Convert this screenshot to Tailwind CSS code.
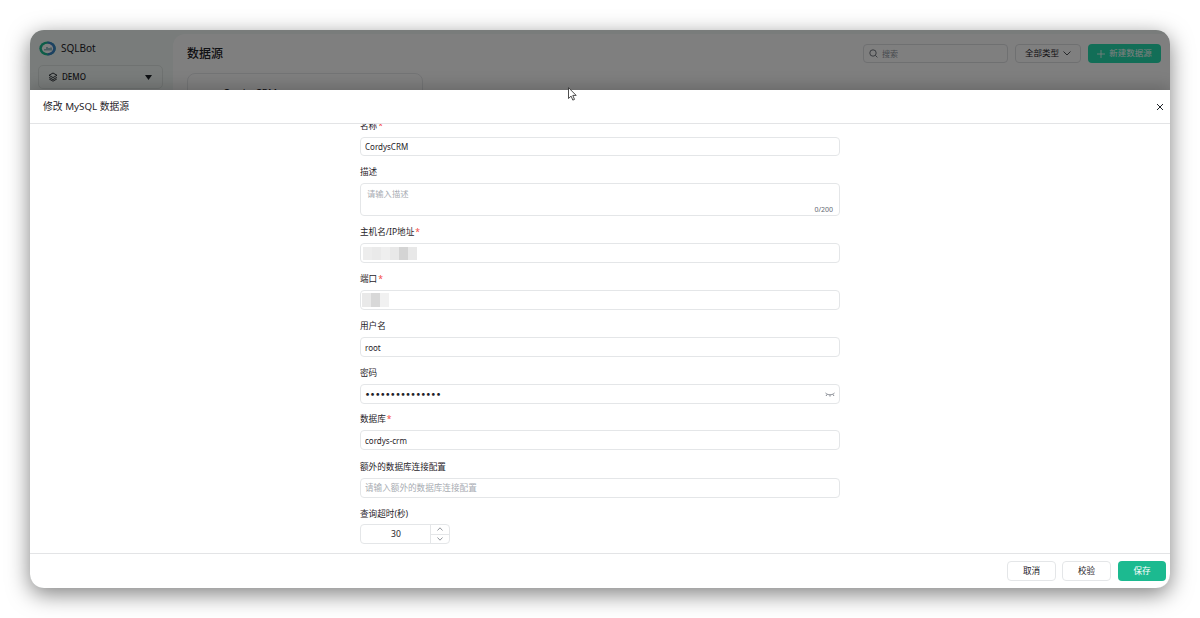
<!DOCTYPE html>
<html lang="zh-CN">

<head>
    <meta charset="UTF-8" />
    <meta name="viewport" content="width=device-width, initial-scale=1.0" />
    <title>SQLBot 数据源</title>
    <script src="https://cdn.jsdelivr.net/npm/@tailwindcss/browser@4"></script>
</head>

<body class="bg-white h-[618px] overflow-hidden font-['Noto_Sans','Noto_Sans_CJK_SC',sans-serif] text-[#1f2329]">
    <div class="relative mx-[30px] mt-[30px] h-[558px] overflow-hidden rounded-[14px] shadow-[0_6px_22px_rgba(0,0,0,0.5)]">

        <!-- page behind the drawer -->
        <div class="flex h-full bg-[#f2f9f6] pt-[4px]">
            <aside class="w-[143px] shrink-0 px-[8px] pt-[2px]">
                <div class="flex h-[24px] items-center gap-[5px] pl-[1px]">
                    <svg class="w-[17px] h-[15px]" viewBox="0 0 17 15">
                        <ellipse cx="8.500" cy="7.500" rx="8.200" ry="7" fill="#1cba90" />
                        <path d="M8.500.5C13 .5 16.700 3.600 16.700 7.500S13 14.500 8.500 14.500z" fill="#3b82c4" />
                        <ellipse cx="8.500" cy="7.500" rx="5.600" ry="4.700" fill="#fff" />
                        <path d="M6 9.500V8M8 9.500V6M10 9.500V7M12 9.500V6.500" stroke="#2c7f8f" stroke-width="1" />
                    </svg>
                    <span class="text-[10px] leading-none">SQLBot</span>
                </div>
                <div class="mt-[5px] flex h-[24px] w-[125px] items-center rounded-[5px] border border-[#dfe5e3] pl-[9px] pr-[10px] text-[8px] font-medium">
                    <svg class="w-[10px] h-[10px] mr-[4px]" viewBox="0 0 10 10" fill="none" stroke="#1f2329" stroke-width="0.9">
                        <path d="M5 1 9 3.300 5 5.600 1 3.300z" />
                        <path d="M1.200 5.400 5 7.600 8.800 5.400M1.200 7 5 9.200 8.800 7" />
                    </svg>
                    <span>DEMO</span>
                    <svg class="ml-auto w-[7px] h-[5px]" viewBox="0 0 7 5"><path d="M0 0h7L3.500 5z" fill="#1f2329" /></svg>
                </div>
            </aside>
            <main class="flex-1 rounded-tl-[12px] bg-white pl-[14px] pr-[9px] pt-[10px]">
                <div class="flex h-[19px] items-center">
                    <h1 class="text-[12px] font-medium leading-none">数据源</h1>
                    <div class="ml-auto flex h-[19px] w-[145px] items-center gap-[4px] rounded-[4px] border border-[#dee0e3] px-[5px] text-[8px] text-[#8f959e]">
                        <svg class="w-[9px] h-[9px]" viewBox="0 0 9 9" fill="none" stroke="#646a73" stroke-width="0.9">
                            <circle cx="4" cy="4" r="3.200" />
                            <path d="m6.400 6.400 2 2" />
                        </svg>
                        <span>搜索</span>
                    </div>
                    <div class="ml-[7px] flex h-[19px] w-[66px] items-center justify-between rounded-[4px] border border-[#dee0e3] pl-[9px] pr-[9px] text-[8.5px]">
                        <span>全部类型</span>
                        <svg class="w-[8px] h-[5px]" viewBox="0 0 8 5" fill="none" stroke="#1f2329" stroke-width="0.8"><path d="m.5.5 3.500 3.500L7.500.5" /></svg>
                    </div>
                    <button class="ml-[7px] flex h-[19px] w-[73px] items-center justify-center gap-[4px] rounded-[4px] bg-[#25dcae] text-[8.5px] text-white">
                        <svg class="w-[8px] h-[8px]" viewBox="0 0 8 8" stroke="#fff" stroke-width="0.8"><path d="M4 0v8M0 4h8" /></svg>
                        <span>新建数据源</span>
                    </button>
                </div>
                <div class="mt-[10px] h-[60px] w-[236px] rounded-[8px] border border-[#e6e8ea] pl-[10px] pt-[12px]">
                    <div class="flex items-center gap-[17px] text-[10px]">
                        <svg class="w-[8px] h-[12px]" viewBox="0 0 8 12"><path d="M0 2 8 6 0 10z" fill="#3a78b8" /></svg>
                        <span>CordysCRM</span>
                    </div>
                </div>
            </main>
        </div>

        <!-- dim layer -->
        <div class="absolute inset-0 bg-black/50"></div>

        <!-- edit drawer -->
        <section class="absolute inset-x-0 bottom-0 flex h-[498px] flex-col bg-white shadow-[0_-4px_14px_rgba(0,0,0,0.18)]">
            <header class="flex h-[34px] shrink-0 items-center justify-between border-b border-[#e3e4e6] pl-[13px] pr-[6px]">
                <h2 class="text-[9.8px] leading-none">修改 MySQL 数据源</h2>
                <svg class="w-[8px] h-[8px]" viewBox="0 0 8 8" stroke="#1f2329" stroke-width="1"><path d="m1 1 6 6M7 1 1 7" /></svg>
            </header>

            <div class="flex-1 overflow-hidden">
                <form class="mx-auto -mt-[5px] w-[480px] text-[8.6px]">
                    <div class="mb-[9px]">
                        <label class="mb-[4px] block h-[14px] leading-[14px]">名称<span class="ml-[1px] text-[#f54a45]">*</span></label>
                        <input class="block h-[19px] w-full rounded-[4px] border border-[#e4e6e8] px-[4px] text-[8px] outline-none" value="CordysCRM" />
                    </div>
                    <div class="mb-[9px]">
                        <label class="mb-[4px] block h-[14px] leading-[14px]">描述</label>
                        <div class="relative h-[33px] rounded-[4px] border border-[#e4e6e8]">
                            <textarea class="block h-full w-full resize-none px-[6px] py-[3px] text-[8.3px] leading-[14px] outline-none placeholder:text-[#a8acb2]" placeholder="请输入描述"></textarea>
                            <span class="absolute bottom-[1px] right-[6px] text-[7px] leading-[9px] text-[#646a73]">0/200</span>
                        </div>
                    </div>
                    <div class="mb-[9px]">
                        <label class="mb-[4px] block h-[14px] leading-[14px]">主机名/IP地址<span class="ml-[1px] text-[#f54a45]">*</span></label>
                        <div class="flex h-[20px] items-center rounded-[4px] border border-[#e4e6e8] pl-[2px]">
                            <div class="flex h-[13px] w-[54px] opacity-90">
                                <i class="w-[9px] bg-[#ececec]"></i><i class="w-[9px] bg-[#e8e8e8]"></i><i class="w-[9px] bg-[#eeeeee]"></i><i class="w-[9px] bg-[#e6e6e6]"></i><i class="w-[9px] bg-[#d0d0d0]"></i><i class="w-[9px] bg-[#e6e6e6]"></i>
                            </div>
                        </div>
                    </div>
                    <div class="mb-[9px]">
                        <label class="mb-[4px] block h-[14px] leading-[14px]">端口<span class="ml-[1px] text-[#f54a45]">*</span></label>
                        <div class="flex h-[20px] items-center rounded-[4px] border border-[#e4e6e8] pl-[1px]">
                            <div class="flex h-[14px] w-[27px]">
                                <i class="w-[9px] bg-[#e9e9e9]"></i><i class="w-[9px] bg-[#d8d8d8]"></i><i class="w-[9px] bg-[#f1f1f1]"></i>
                            </div>
                        </div>
                    </div>
                    <div class="mb-[9px]">
                        <label class="mb-[4px] block h-[14px] leading-[14px]">用户名</label>
                        <input class="block h-[20px] w-full rounded-[4px] border border-[#e4e6e8] px-[4px] text-[8px] outline-none" value="root" />
                    </div>
                    <div class="mb-[8px]">
                        <label class="mb-[4px] block h-[14px] leading-[14px]">密码</label>
                        <div class="flex h-[20px] items-center justify-between rounded-[4px] border border-[#e4e6e8] pl-[4px] pr-[4px]">
                            <span class="font-['Inter'] text-[9px]">•••••••••••••••</span>
                            <svg class="w-[10px] h-[5px]" viewBox="0 0 10 5" fill="none" stroke="#646a73" stroke-width="0.8"><path d="M.5 1c2.500 2.400 6.500 2.400 9 0M2 2.500 1 4M8 2.500 9 4M5 3.200V4.600" /></svg>
                        </div>
                    </div>
                    <div class="mb-[10px]">
                        <label class="mb-[4px] block h-[14px] leading-[14px]">数据库<span class="ml-[1px] text-[#f54a45]">*</span></label>
                        <input class="block h-[20px] w-full rounded-[4px] border border-[#e4e6e8] px-[4px] text-[8px] outline-none" value="cordys-crm" />
                    </div>
                    <div class="mb-[9px]">
                        <label class="mb-[4px] block h-[14px] leading-[14px]">额外的数据库连接配置</label>
                        <input class="block h-[20px] w-full rounded-[4px] border border-[#e4e6e8] px-[4px] outline-none placeholder:text-[#a8acb2]" placeholder="请输入额外的数据库连接配置" />
                    </div>
                    <div>
                        <label class="mb-[3px] block h-[14px] leading-[14px]">查询超时(秒)</label>
                        <div class="flex h-[20px] w-[90px] rounded-[4px] border border-[#e4e6e8]">
                            <span class="flex-1 pl-[1px] text-center leading-[19px]">30</span>
                            <div class="flex w-[19px] flex-col border-l border-[#e4e6e8]">
                                <span class="flex flex-1 items-center justify-center border-b border-[#e4e6e8]">
                                    <svg class="w-[6px] h-[4px]" viewBox="0 0 6 4" fill="none" stroke="#646a73" stroke-width="0.7"><path d="M.5 3.500 3 .8l2.500 2.700" /></svg>
                                </span>
                                <span class="flex flex-1 items-center justify-center">
                                    <svg class="w-[6px] h-[4px]" viewBox="0 0 6 4" fill="none" stroke="#646a73" stroke-width="0.7"><path d="M.5.5 3 3.200 5.500.5" /></svg>
                                </span>
                            </div>
                        </div>
                    </div>
                </form>
            </div>

            <footer class="flex h-[35px] shrink-0 items-center justify-end border-t border-[#e3e4e6] pr-[4px] text-[8.6px]">
                <button class="h-[20px] w-[49px] rounded-[4px] border border-[#e4e6e8] bg-white">取消</button>
                <button class="ml-[6px] h-[20px] w-[49px] rounded-[4px] border border-[#e4e6e8] bg-white">校验</button>
                <button class="ml-[7px] h-[20px] w-[48px] rounded-[4px] bg-[#1cba90] text-white">保存</button>
            </footer>
        </section>

        <!-- mouse pointer -->
        <svg class="absolute left-[538px] top-[57px] w-[9px] h-[14px]" viewBox="0 0 9 14">
            <path d="M.5.7v10.800l2.600-2.400 1.700 4 1.700-.7-1.700-4h3.400z" fill="#fff" stroke="#222" stroke-width="0.8" />
        </svg>
    </div>
</body>

</html>
